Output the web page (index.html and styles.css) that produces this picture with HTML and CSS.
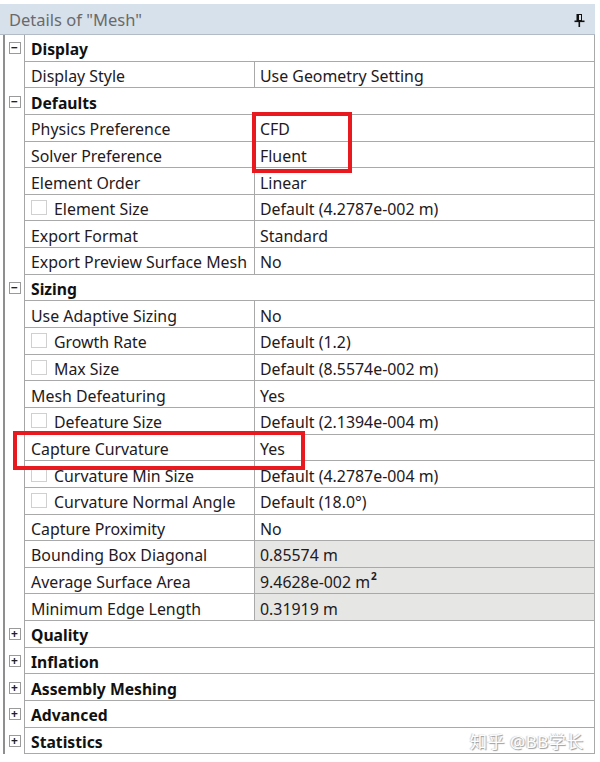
FILE: index.html
```html
<!DOCTYPE html>
<html lang="en">

<head>
    <meta charset="UTF-8">
    <title>Details of "Mesh"</title>
    <link rel="stylesheet" href="styles.css">
</head>

<body>
    <div class="panel">
        <div class="titlebar">
            <span class="title">Details of "Mesh"</span>
            <svg class="pin" width="11" height="13" viewBox="0 0 11 13">
                <rect x="3" y="0.5" width="4.5" height="6" fill="none" stroke="#111" stroke-width="1"/>
                <rect x="3" y="0" width="2" height="7" fill="#111"/>
                <rect x="0.5" y="6.5" width="10" height="1.6" fill="#111"/>
                <rect x="4.5" y="8" width="1.6" height="5" fill="#111"/>
            </svg>
        </div>

        <div class="grid">
            <!-- Display -->
            <div class="row section"><div class="exp"><span class="box">&minus;</span></div><div class="head">Display</div></div>
            <div class="row"><div class="exp"></div><div class="name">Display Style</div><div class="value">Use Geometry Setting</div></div>

            <!-- Defaults -->
            <div class="row section"><div class="exp"><span class="box">&minus;</span></div><div class="head">Defaults</div></div>
            <div class="row"><div class="exp"></div><div class="name">Physics Preference</div><div class="value">CFD</div></div>
            <div class="row"><div class="exp"></div><div class="name">Solver Preference</div><div class="value">Fluent</div></div>
            <div class="row"><div class="exp"></div><div class="name">Element Order</div><div class="value">Linear</div></div>
            <div class="row"><div class="exp"></div><div class="name"><span class="check"></span>Element Size</div><div class="value">Default (4.2787e-002 m)</div></div>
            <div class="row"><div class="exp"></div><div class="name">Export Format</div><div class="value">Standard</div></div>
            <div class="row"><div class="exp"></div><div class="name">Export Preview Surface Mesh</div><div class="value">No</div></div>

            <!-- Sizing -->
            <div class="row section"><div class="exp"><span class="box">&minus;</span></div><div class="head">Sizing</div></div>
            <div class="row"><div class="exp"></div><div class="name">Use Adaptive Sizing</div><div class="value">No</div></div>
            <div class="row"><div class="exp"></div><div class="name"><span class="check"></span>Growth Rate</div><div class="value">Default (1.2)</div></div>
            <div class="row"><div class="exp"></div><div class="name"><span class="check"></span>Max Size</div><div class="value">Default (8.5574e-002 m)</div></div>
            <div class="row"><div class="exp"></div><div class="name">Mesh Defeaturing</div><div class="value">Yes</div></div>
            <div class="row"><div class="exp"></div><div class="name"><span class="check"></span>Defeature Size</div><div class="value">Default (2.1394e-004 m)</div></div>
            <div class="row"><div class="exp"></div><div class="name">Capture Curvature</div><div class="value">Yes</div></div>
            <div class="row"><div class="exp"></div><div class="name"><span class="check"></span>Curvature Min Size</div><div class="value">Default (4.2787e-004 m)</div></div>
            <div class="row"><div class="exp"></div><div class="name"><span class="check"></span>Curvature Normal Angle</div><div class="value">Default (18.0°)</div></div>
            <div class="row"><div class="exp"></div><div class="name">Capture Proximity</div><div class="value">No</div></div>
            <div class="row"><div class="exp"></div><div class="name">Bounding Box Diagonal</div><div class="value readonly">0.85574 m</div></div>
            <div class="row"><div class="exp"></div><div class="name">Average Surface Area</div><div class="value readonly">9.4628e-002 m<sup>2</sup></div></div>
            <div class="row"><div class="exp"></div><div class="name">Minimum Edge Length</div><div class="value readonly">0.31919 m</div></div>

            <!-- collapsed groups -->
            <div class="row section"><div class="exp"><span class="box">+</span></div><div class="head">Quality</div></div>
            <div class="row section"><div class="exp"><span class="box">+</span></div><div class="head">Inflation</div></div>
            <div class="row section"><div class="exp"><span class="box">+</span></div><div class="head">Assembly Meshing</div></div>
            <div class="row section"><div class="exp"><span class="box">+</span></div><div class="head">Advanced</div></div>
            <div class="row section"><div class="exp"><span class="box">+</span></div><div class="head">Statistics</div></div>
        </div>

        <!-- red highlight frames -->
        <div class="mark mark-defaults"></div>
        <div class="mark mark-curvature"></div>

        <div class="watermark">知乎 @BB学长</div>
    </div>
</body>

</html>
```

FILE: styles.css
```css
body {
    margin: 0;
    padding: 0;
    background-color: #fff;
    font-family: "Noto Sans", "Open Sans", "Noto Sans CJK SC", sans-serif;
}

.panel {
    position: relative;
    width: 600px;
    height: 762px;
    padding-top: 4px;
    box-sizing: border-box;
}

.titlebar {
    display: flex;
    align-items: center;
    justify-content: space-between;
    width: 595px;
    height: 31px;
    padding: 0 10px 0 9px;
    box-sizing: border-box;
    background-color: #d7e1eb;
    border-bottom: 1px solid #b3bcc6;
}

.title {
    font-size: 16.5px;
    color: #6a6a6a;
}

.pin {
    display: block;
    margin-top: 2px;
}

.grid {
    width: 589px;
    margin-left: 3px;
    border-left: 2px solid #8f8f8f;
    border-right: 1px solid #a9a9a9;
}

.row {
    display: grid;
    grid-template-columns: 20px 230px 1fr;
    height: 26.65px;
    font-size: 15.9px;
    color: #24191d;
}

.exp {
    display: flex;
    align-items: center;
    justify-content: center;
    border-right: 1px solid #a6a6a6;
}

.box {
    display: flex;
    align-items: center;
    justify-content: center;
    width: 10px;
    height: 10px;
    border: 1px solid #9a9a9a;
    font-size: 12px;
    line-height: 1;
    font-weight: bold;
    color: #222;
    background: #fff;
}

.name,
.value,
.head {
    display: flex;
    align-items: center;
    padding-top: 3px;
    border-bottom: 1px solid #a9a9a9;
    box-sizing: border-box;
    white-space: nowrap;
    overflow: hidden;
}

.name {
    padding-left: 6px;
    border-right: 1px solid #a9a9a9;
}

.value {
    padding-left: 5px;
}

.head {
    grid-column: 2 / 4;
    padding-left: 6px;
    font-weight: bold;
    color: #111;
    font-size: 15.7px;
}

.readonly {
    background-color: #e6e6e4;
}

.value sup {
    position: relative;
    top: -6px;
    font-size: 10px;
    font-weight: bold;
    margin-left: 1px;
}

.check {
    display: inline-block;
    width: 16px;
    height: 15px;
    margin-top: -3px;
    margin-right: 7px;
    border: 1px solid #d0d0d0;
    box-sizing: border-box;
}

.mark {
    position: absolute;
    border: 4px solid #e8191f;
    box-sizing: border-box;
}

.mark-defaults {
    left: 252px;
    top: 112px;
    width: 100px;
    height: 61px;
}

.mark-curvature {
    left: 13px;
    top: 431px;
    width: 292px;
    height: 39px;
}

.watermark {
    position: absolute;
    left: 470px;
    top: 728px;
    font-size: 17px;
    color: #fdfdfd;
    letter-spacing: 0.5px;
    text-shadow: 1px 1px 1px #9a9a9a, -1px 0 1px #c8c8c8;
}
```
